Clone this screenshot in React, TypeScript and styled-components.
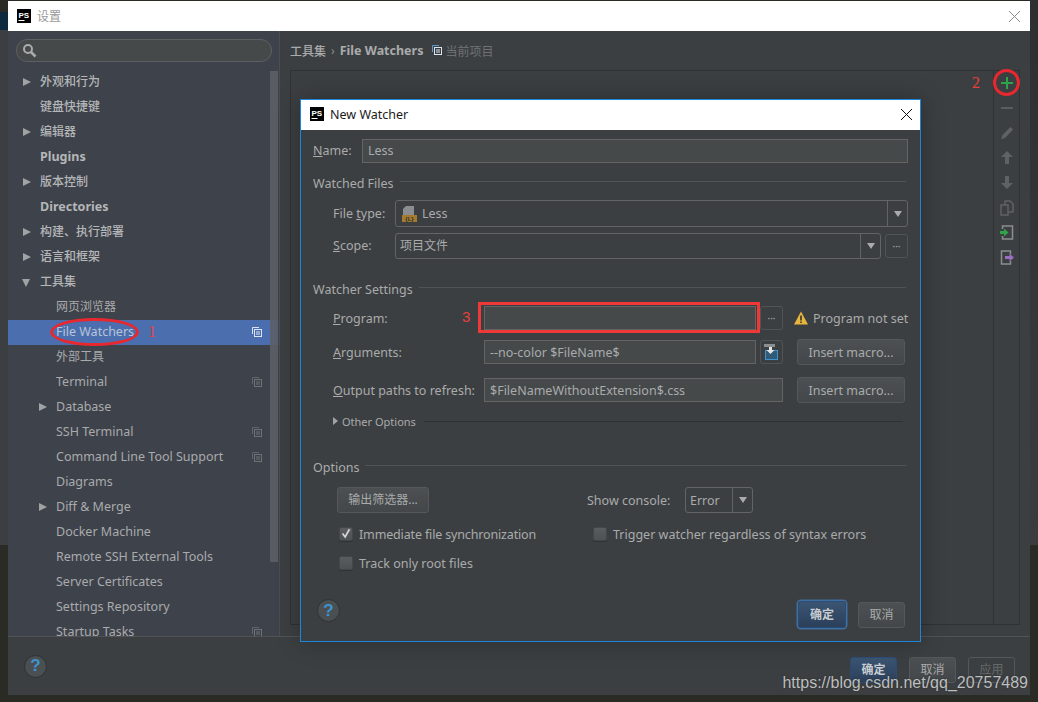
import React from "react";
import styled, { createGlobalStyle } from "styled-components";

const FONT = `"Noto Sans", "Noto Sans CJK SC", sans-serif`;

const isCjk = (s: string) => /[^\x00-\x7f]/.test(s);

const GlobalStyle = createGlobalStyle`
  html, body {
    margin: 0;
    padding: 0;
    background: #2b2b25;
  }
  * {
    box-sizing: border-box;
  }
`;

const Desktop = styled.div`
  position: relative;
  width: 1038px;
  height: 702px;
  overflow: hidden;
  padding: 1px 8px 7px;
  font-family: ${FONT};
  font-size: 12.5px;
  color: #a9abac;
  background:
    linear-gradient(#0d2a3f, #0d2a3f) 0 12px / 8px 18px no-repeat,
    linear-gradient(#3c3f41, #3c3f41) 0 30px / 8px 515px no-repeat,
    linear-gradient(#2e2f31, #3a3c3e) 1030px 0 / 8px 545px no-repeat,
    #2b2b25;
`;

const Window = styled.div`
  height: 100%;
  display: flex;
  flex-direction: column;
  background: #3c3f41;
`;

const TitleBar = styled.div`
  flex: none;
  height: 30px;
  background: #fff;
  display: flex;
  align-items: center;
  padding: 0 ${(p) => (p.$dialog ? "8px 2px 9px" : "10px 0 9px")};
  gap: 6px;
  font-size: ${(p) => (p.$dialog ? "12.5px" : "12px")};
  color: ${(p) => (p.$dialog ? "#1b1b1b" : "#999")};
`;

const TitleText = styled.span`
  flex: 1;
`;

const CloseBtn = styled.svg`
  width: 11px;
  height: 11px;
  stroke: ${(p) => p.color};
  stroke-width: 1;
  fill: none;
  display: block;
`;

const Main = styled.div`
  flex: 1;
  min-height: 0;
  display: flex;
`;

const Sidebar = styled.div`
  position: relative;
  width: 272px;
  flex: none;
  background: #3e424b;
  border-right: 1px solid #4c4f52;
  display: flex;
  flex-direction: column;
  overflow: hidden;
`;

const SearchBox = styled.div`
  flex: none;
  height: 23px;
  margin: 8px 7px 8px 8px;
  border: 1px solid #5d5f60;
  border-radius: 11px;
  background: #45494a;
  display: flex;
  align-items: center;
  padding-left: 5px;
`;

const Tree = styled.div`
  flex: 1;
  min-height: 0;
  overflow: hidden;
`;

const Row = styled.div`
  position: relative;
  height: 25px;
  display: flex;
  align-items: center;
  padding-left: ${(p) => (p.$child ? "48px" : "32px")};
  padding-right: 17px;
  background: ${(p) => (p.$selected ? "#4b6eaf" : "transparent")};
  color: ${(p) => (p.$selected ? "#b9c4d6" : p.$bold ? "#b4b6b7" : "#a9abac")};
  font-size: ${(p) => (p.$cjk ? "12px" : "12.5px")};
  font-weight: ${(p) => (!p.$bold ? 400 : p.$cjk ? 500 : 700)};
`;

const RowText = styled.span`
  flex: 1;
  white-space: nowrap;
  padding-bottom: 3px;
`;

const Arrow = styled.span`
  position: absolute;
  left: ${(p) => (p.$child ? "31px" : "15px")};
  top: 8px;
  width: 0;
  height: 0;
  border-style: solid;
  border-color: transparent;
  ${(p) =>
    p.$open
      ? `border-width: 8px 4px 0 4px; border-top-color: #a0a2a3; top: 9px; left: 14px;`
      : `border-width: 4px 0 4px 8px; border-left-color: #a0a2a3;`}
`;

const Scrollbar = styled.div`
  position: absolute;
  right: 0;
  top: 40px;
  width: 9px;
  height: 491px;
  background: #5c5f66;
  opacity: 0.9;
  border-right: 1px solid #3e424b;
`;

const Ellipse = styled.div`
  position: absolute;
  left: 42px;
  top: -2px;
  width: 89px;
  height: 28px;
  border: 3px solid #e8282e;
  border-radius: 50%;
`;

const RedNumber = styled.span`
  font-family: "Liberation Serif", serif;
  font-size: 16px;
  color: #e8403c;
  font-weight: 400;
`;

const OneMark = styled(RedNumber)`
  position: absolute;
  left: 140px;
  top: 3px;
`;

const Content = styled.div`
  flex: 1;
  display: flex;
  flex-direction: column;
  padding: 0 10px 11px 10px;
  min-width: 0;
`;

const Crumbs = styled.div`
  flex: none;
  height: 39px;
  display: flex;
  align-items: center;
  gap: 4px;
  font-weight: 700;
  color: #a9abac;
`;

const CrumbCjk = styled.span`
  font-size: 12px;
  font-weight: 500;
`;

const CrumbSep = styled.span`
  color: #8a8c8d;
  font-weight: 400;
  font-size: 12px;
  margin: 0 1px;
`;

const CrumbNote = styled.span`
  display: flex;
  align-items: center;
  gap: 3px;
  margin-left: 5px;
  font-weight: 400;
  font-size: 12px;
  color: #6f7274;
`;

const Panel = styled.div`
  flex: 1;
  border: 1px solid #2f3132;
  display: flex;
  justify-content: flex-end;
`;

const ToolStrip = styled.div`
  position: relative;
  width: 26px;
  border-left: 1px solid #2f3132;
  display: flex;
  flex-direction: column;
  align-items: center;
`;

const ToolSlot = styled.div`
  width: 100%;
  height: 25px;
  display: flex;
  align-items: center;
  justify-content: center;
  padding-bottom: 2px;
`;

const Circle = styled.div`
  position: absolute;
  left: -1px;
  top: -2px;
  width: 27px;
  height: 27px;
  border: 3px solid #e8282e;
  border-radius: 50%;
`;

const TwoMark = styled(RedNumber)`
  position: absolute;
  left: -22px;
  top: 3px;
`;

const Footer = styled.div`
  flex: none;
  height: 59px;
  border-top: 1px solid #515354;
  display: flex;
  align-items: center;
  padding: 0 15px 0 16px;
`;

const Spacer = styled.div`
  flex: 1;
`;

const Help = styled.div`
  width: 23px;
  height: 23px;
  flex: none;
  margin-bottom: ${(p) => p.$lift || 0}px;
  border-radius: 50%;
  border: 1px solid #2f3234;
  background: #4a4f52;
  color: #3f93cf;
  display: flex;
  align-items: center;
  justify-content: center;
  font-family: "Liberation Sans", sans-serif;
  font-weight: 700;
  font-size: 17px;
`;

const Actions = styled.div`
  display: flex;
  align-items: center;
  gap: 12px;
  margin-top: ${(p) => p.$mt || 0}px;
`;

const Btn = styled.div`
  width: ${(p) => p.$w || 47}px;
  height: ${(p) => p.$h || 26}px;
  flex: none;
  border-radius: 3px;
  padding-bottom: ${(p) => (p.$latin ? 0 : 2)}px;
  display: flex;
  align-items: center;
  justify-content: center;
  white-space: nowrap;
  font-size: ${(p) => (p.$latin ? "12.5px" : "12px")};
  border: 1px solid
    ${(p) => (p.$primary ? "#2a4d75" : p.$disabled ? "#555859" : "#54585a")};
  background: ${(p) =>
    p.$primary
      ? "linear-gradient(#3b5573, #2b3f5a)"
      : p.$disabled
        ? "transparent"
        : "linear-gradient(#4c5052, #434749)"};
  color: ${(p) =>
    p.$primary ? "#c8ccd0" : p.$disabled ? "#666a6c" : "#a9abac"};
  font-weight: ${(p) => (p.$primary ? 700 : 400)};
  box-shadow: ${(p) => (p.$focus ? "0 0 0 1.5px #3f6ea0" : "none")};
`;

const MacroBtn = styled(Btn)`
  margin-left: 14px;
`;

const Dialog = styled.div`
  position: absolute;
  left: 300px;
  top: 99px;
  width: 621px;
  height: 543px;
  border: 1px solid #1c86dc;
  background: #3c3f41;
  box-shadow: 0 0 22px rgba(0, 0, 0, 0.28);
  display: flex;
  flex-direction: column;
`;

const DialogBody = styled.div`
  flex: 1;
  display: flex;
  flex-direction: column;
  padding: 0 12px 11px;
`;

const FormRow = styled.div`
  position: relative;
  flex: none;
  display: flex;
  align-items: center;
  height: ${(p) => p.$h || 24}px;
  margin-top: ${(p) => p.$mt || 0}px;
  padding-left: ${(p) => p.$indent || 0}px;
`;

const Label = styled.label`
  flex: none;
  width: ${(p) => p.$w}px;
  margin-left: ${(p) => p.$ml || 0}px;
  padding-bottom: ${(p) => (p.$up ? 2 : 0)}px;
  white-space: nowrap;
`;

const Input = styled.div`
  flex: ${(p) => (p.$w ? "none" : "1")};
  width: ${(p) => (p.$w ? `${p.$w}px` : "auto")};
  height: 24px;
  border: 1px solid #646464;
  background: #45494a;
  padding: 0 5px ${(p) => (p.$up ? 2 : 0)}px;
  display: flex;
  align-items: center;
  white-space: nowrap;
`;

const RedBox = styled.div`
  position: relative;
  flex: none;
  &::after {
    content: "";
    position: absolute;
    inset: -4px -4px -3px -6px;
    border: 3px solid #ef3838;
  }
`;

const ThreeMark = styled(RedNumber)`
  position: absolute;
  left: 149px;
  top: 2px;
  font-family: "Liberation Sans", sans-serif;
  font-size: 15px;
`;

const Heading = styled.div`
  flex: none;
  height: 16px;
  margin-top: ${(p) => p.$mt}px;
  margin-right: 2px;
  display: flex;
  align-items: center;
  gap: 6px;
  white-space: nowrap;
  &::after {
    content: "";
    flex: 1;
    height: 1px;
    margin-top: -4px;
    background: #515354;
  }
`;

const OtherOptions = styled.div`
  flex: none;
  height: 16px;
  margin-top: 11px;
  margin-left: 20px;
  margin-right: 5px;
  display: flex;
  align-items: center;
  font-size: 11px;
  white-space: nowrap;
  &::before {
    content: "";
    width: 0;
    height: 0;
    margin-right: 4px;
    border-style: solid;
    border-color: transparent transparent transparent #a0a2a3;
    border-width: 4px 0 4px 5px;
  }
  &::after {
    content: "";
    flex: 1;
    height: 1px;
    margin-left: 8px;
    background: #2f3132;
  }
`;

const Combo = styled.div`
  flex: ${(p) => (p.$w ? "none" : "1")};
  width: ${(p) => (p.$w ? `${p.$w}px` : "auto")};
  height: 100%;
  border: 1px solid #646464;
  border-radius: 3px;
  display: flex;
  align-items: center;
  min-width: 0;
`;

const ComboValue = styled.div`
  flex: 1;
  display: flex;
  align-items: center;
  gap: 5px;
  padding-left: ${(p) => (p.$icon ? 6 : 4)}px;
  padding-bottom: ${(p) => (p.$cjk ? 2 : 0)}px;
  height: 100%;
  font-size: ${(p) => (p.$cjk ? "12px" : "12.5px")};
`;

const ComboArrow = styled.div`
  flex: none;
  width: 20px;
  height: 100%;
  border-left: 1px solid #646464;
  display: flex;
  align-items: center;
  justify-content: center;
  &::after {
    content: "";
    width: 0;
    height: 0;
    border-style: solid;
    border-color: #a9abac transparent transparent transparent;
    border-width: 6px 4px 0 4px;
  }
`;

const SmallBtn = styled.div`
  flex: none;
  width: 23px;
  height: 24px;
  margin-left: ${(p) => p.$ml || 4}px;
  border: 1px solid #515456;
  border-radius: 3px;
  display: flex;
  align-items: center;
  justify-content: center;
  color: #a9abac;
  font-size: 10px;
  line-height: 1;
`;

const Warn = styled.div`
  flex: none;
  display: flex;
  align-items: center;
  gap: 5px;
  margin-left: 11px;
  white-space: nowrap;
`;

const Check = styled.div`
  flex: none;
  width: 14px;
  height: 14px;
  margin: 0 6px 0 ${(p) => p.$ml || 0}px;
  border-radius: 2px;
  background: linear-gradient(#5a5d5f, #4e5153);
  border: 1px solid #43474a;
  box-shadow: 0 1px 0 #2f3234;
  display: flex;
  align-items: center;
  justify-content: center;
`;

const CheckText = styled.span`
  white-space: nowrap;
  flex: none;
  width: ${(p) => (p.$fixed ? `${p.$fixed}px` : "auto")};
  letter-spacing: ${(p) => (p.$tight ? "-0.15px" : "0")};
`;

const DialogFooter = styled.div`
  margin-top: auto;
  display: flex;
  align-items: center;
  padding: 0 3px 0 4px;
`;

const Watermark = styled.div`
  position: absolute;
  right: 10px;
  top: 673px;
  font-family: "Liberation Sans", sans-serif;
  font-size: 16px;
  line-height: 20px;
  color: #bcbebf;
  text-shadow: 0 0 2px #2b2b2b;
  white-space: nowrap;
`;

const PsLogoBox = styled.svg`
  width: 14px;
  height: 14px;
  flex: none;
  display: block;
`;

const CopyBox = styled.svg`
  width: 10px;
  height: 10px;
  flex: none;
  margin-bottom: 2px;
  fill: none;
`;

function PsLogo() {
  return (
    <PsLogoBox viewBox="0 0 14 14">
      <rect width="14" height="14" fill="#000" />
      <text x="1.5" y="8.5" fontFamily="Liberation Sans, sans-serif" fontWeight="700" fontSize="8" fill="#fff">
        PS
      </text>
      <rect x="1.5" y="11" width="6" height="1" fill="#fff" />
    </PsLogoBox>
  );
}

function CopyIcon({ active, tinted }: { active?: boolean; tinted?: boolean }) {
  const front = active || tinted ? "#dbe4f2" : "#6f7274";
  const back = active ? "#dbe4f2" : tinted ? "#5f9cc5" : "#62666a";
  return (
    <CopyBox viewBox="0 0 10 10" stroke={front}>
      <path d="M.5 7V.5H7" stroke={back} />
      <rect x="2.5" y="2.5" width="7" height="7" />
      <path d="M4 5h4M4 7h4" />
    </CopyBox>
  );
}

function SearchIcon() {
  return (
    <svg width="15" height="15" viewBox="0 0 15 15" fill="none" stroke="#a9abac" strokeWidth="2">
      <circle cx="6" cy="6" r="4" />
      <path d="M9 9l4.5 4.5" strokeWidth="2.5" />
    </svg>
  );
}

function ToolIcon({ kind }: { kind: string }) {
  if (kind === "plus") {
    return (
      <svg width="14" height="14" viewBox="0 0 14 14" stroke="#2da44a" strokeWidth="2">
        <path d="M7 1v12M1 7h12" />
      </svg>
    );
  }
  if (kind === "minus") {
    return (
      <svg width="14" height="14" viewBox="0 0 14 14" stroke="#5a5d5f" strokeWidth="2">
        <path d="M1 7h12" />
      </svg>
    );
  }
  if (kind === "edit") {
    return (
      <svg width="14" height="14" viewBox="0 0 14 14" fill="#5f6264">
        <path d="M10.500 1l2.500 2.500-7.500 8L1 13.500l1.500-4.500z" />
      </svg>
    );
  }
  if (kind === "up" || kind === "down") {
    return (
      <svg width="12" height="13" viewBox="0 0 12 13" fill="#5f6264">
        <path d={kind === "up" ? "M6 0l6 6H8v7H4V6H0z" : "M6 13L0 7h4V0h4v7h4z"} />
      </svg>
    );
  }
  if (kind === "copy") {
    return (
      <svg width="14" height="16" viewBox="0 0 14 16" fill="none" stroke="#5f6264" strokeWidth="1.500">
        <path d="M1 5h7v10H1z" />
        <path d="M5 5V1h5l3 3v8H8" />
      </svg>
    );
  }
  const accent = kind === "import" ? "#2da44a" : "#9a6fbf";
  return (
    <svg width="14" height="15" viewBox="0 0 14 15" fill="none">
      <path d={kind === "import" ? "M2.500 4V1h10v13h-10v-3" : "M10.500 4V1h-9v13h9v-3"} stroke="#8b8e90" strokeWidth="1.500" />
      <path d={kind === "import" ? "M0 6h4V3.500L8.500 7.500 4 11.500V9H0z" : "M5 6h4.500V3.500L14 7.500l-4.500 4V9H5z"} fill={accent} />
    </svg>
  );
}

function LessIcon() {
  return (
    <svg width="15" height="16" viewBox="0 0 15 16">
      <path d="M4 0h8v9H1V3z" fill="#8b8e90" />
      <rect y="9" width="15" height="7" fill="#a37a2e" />
      <text x="7.5" y="15" textAnchor="middle" fontFamily="Liberation Sans, sans-serif" fontWeight="700" fontSize="6" fill="#2f3132">
        {"{L}"}
      </text>
    </svg>
  );
}

function WarnIcon() {
  return (
    <svg width="14" height="14" viewBox="0 0 14 14">
      <path d="M7 .5L14 13.500H0z" fill="#e8b63f" />
      <path d="M6.200 4.500h1.600v5H6.200zM6.200 10.500h1.600v1.600H6.200z" fill="#33312b" />
    </svg>
  );
}

function InsertIcon() {
  return (
    <svg width="15" height="16" viewBox="0 0 15 16" fill="none">
      <rect x="1.500" y="6.500" width="12" height="9" stroke="#3f93cf" fill="#2f5a78" />
      <rect x="0" y="0" width="11" height="3" fill="#8b8e90" />
      <path d="M5 3h3v3h2.500L6.500 10 2.500 6H5z" fill="#e6e6e6" />
    </svg>
  );
}

type Item = {
  text: string;
  child?: boolean;
  bold?: boolean;
  arrow?: boolean;
  open?: boolean;
  copy?: boolean;
  selected?: boolean;
};

const items: Item[] = [
  { text: "外观和行为", bold: true, arrow: true },
  { text: "键盘快捷键", bold: true },
  { text: "编辑器", bold: true, arrow: true },
  { text: "Plugins", bold: true },
  { text: "版本控制", bold: true, arrow: true },
  { text: "Directories", bold: true },
  { text: "构建、执行部署", bold: true, arrow: true },
  { text: "语言和框架", bold: true, arrow: true },
  { text: "工具集", bold: true, arrow: true, open: true },
  { text: "网页浏览器", child: true },
  { text: "File Watchers", child: true, copy: true, selected: true },
  { text: "外部工具", child: true },
  { text: "Terminal", child: true, copy: true },
  { text: "Database", child: true, arrow: true },
  { text: "SSH Terminal", child: true, copy: true },
  { text: "Command Line Tool Support", child: true, copy: true },
  { text: "Diagrams", child: true },
  { text: "Diff & Merge", child: true, arrow: true },
  { text: "Docker Machine", child: true },
  { text: "Remote SSH External Tools", child: true },
  { text: "Server Certificates", child: true },
  { text: "Settings Repository", child: true },
  { text: "Startup Tasks", child: true, copy: true },
];

const tools = ["plus", "minus", "edit", "up", "down", "copy", "import", "export"];

export default function App() {
  return (
    <Desktop>
      <GlobalStyle />
      <Window>
        <TitleBar>
          <PsLogo />
          <TitleText>设置</TitleText>
          <CloseBtn viewBox="0 0 11 11" color="#8a8a8a">
            <path d="M0 0l11 11M11 0L0 11" />
          </CloseBtn>
        </TitleBar>
        <Main>
          <Sidebar>
            <SearchBox>
              <SearchIcon />
            </SearchBox>
            <Tree>
              {items.map((item) => (
                <Row
                  key={item.text}
                  $child={item.child}
                  $bold={item.bold}
                  $cjk={isCjk(item.text)}
                  $selected={item.selected}
                >
                  {item.arrow && <Arrow $child={item.child} $open={item.open} />}
                  {item.selected && <Ellipse />}
                  {item.selected && <OneMark>1</OneMark>}
                  <RowText>{item.text}</RowText>
                  {item.copy && <CopyIcon active={item.selected} />}
                </Row>
              ))}
            </Tree>
            <Scrollbar />
          </Sidebar>
          <Content>
            <Crumbs>
              <CrumbCjk>工具集</CrumbCjk>
              <CrumbSep>›</CrumbSep>
              <span>File Watchers</span>
              <CrumbNote>
                <CopyIcon tinted />
                当前项目
              </CrumbNote>
            </Crumbs>
            <Panel>
              <ToolStrip>
                <Circle />
                <TwoMark>2</TwoMark>
                {tools.map((t) => (
                  <ToolSlot key={t}>
                    <ToolIcon kind={t} />
                  </ToolSlot>
                ))}
              </ToolStrip>
            </Panel>
          </Content>
        </Main>
        <Footer>
          <Help>?</Help>
          <Spacer />
          <Actions $mt={8}>
            <Btn $primary>确定</Btn>
            <Btn>取消</Btn>
            <Btn $disabled>应用</Btn>
          </Actions>
        </Footer>
      </Window>

      <Dialog>
        <TitleBar $dialog>
          <PsLogo />
          <TitleText>New Watcher</TitleText>
          <CloseBtn viewBox="0 0 11 11" color="#111">
            <path d="M0 0l11 11M11 0L0 11" />
          </CloseBtn>
        </TitleBar>
        <DialogBody>
          <FormRow $mt={9}>
            <Label $w={49} $up>
              <u>N</u>ame:
            </Label>
            <Input $up>Less</Input>
          </FormRow>

          <Heading $mt={12}>Watched Files</Heading>
          <FormRow $mt={9} $h={27} $indent={20}>
            <Label $w={62}>
              File <u>t</u>ype:
            </Label>
            <Combo>
              <ComboValue $icon>
                <LessIcon />
                Less
              </ComboValue>
              <ComboArrow />
            </Combo>
          </FormRow>
          <FormRow $mt={6} $h={26} $indent={20}>
            <Label $w={62} $up>
              <u>S</u>cope:
            </Label>
            <Combo>
              <ComboValue $cjk>项目文件</ComboValue>
              <ComboArrow />
            </Combo>
            <SmallBtn>···</SmallBtn>
          </FormRow>

          <Heading $mt={22}>Watcher Settings</Heading>
          <FormRow $mt={9} $indent={20}>
            <Label $w={151}>
              <u>P</u>rogram:
            </Label>
            <ThreeMark>3</ThreeMark>
            <RedBox>
              <Input $w={272} />
            </RedBox>
            <SmallBtn>···</SmallBtn>
            <Warn>
              <WarnIcon />
              <span>Program not set</span>
            </Warn>
          </FormRow>
          <FormRow $mt={10} $indent={20}>
            <Label $w={151}>
              <u>A</u>rguments:
            </Label>
            <Input $w={272}>--no-color $FileName$</Input>
            <SmallBtn>
              <InsertIcon />
            </SmallBtn>
            <MacroBtn $w={108} $latin>
              Insert macro...
            </MacroBtn>
          </FormRow>
          <FormRow $mt={14} $indent={20}>
            <Label $w={151}>
              <u>O</u>utput paths to refresh:
            </Label>
            <Input $w={299}>$FileNameWithoutExtension$.css</Input>
            <MacroBtn $w={108} $latin>
              Insert macro...
            </MacroBtn>
          </FormRow>
          <OtherOptions>Other Options</OtherOptions>

          <Heading $mt={30}>Options</Heading>
          <FormRow $mt={12} $h={26} $indent={24}>
            <Btn $w={92}>输出筛选器...</Btn>
            <Label $w={98} $ml={158}>
              Show console:
            </Label>
            <Combo $w={68}>
              <ComboValue>Error</ComboValue>
              <ComboArrow />
            </Combo>
          </FormRow>
          <FormRow $mt={12} $h={18} $indent={24}>
            <Check $ml={2}>
              <svg width="14" height="14" viewBox="0 0 14 14" fill="none" stroke="#d5d6d7" strokeWidth="2">
                <path d="M3 6.500L6 10.500L11 1.500" />
              </svg>
            </Check>
            <CheckText $fixed={234} $tight>
              Immediate file synchronization
            </CheckText>
            <Check />
            <CheckText>Trigger watcher regardless of syntax errors</CheckText>
          </FormRow>
          <FormRow $mt={11} $h={18} $indent={24}>
            <Check $ml={2} />
            <CheckText>Track only root files</CheckText>
          </FormRow>

          <DialogFooter>
            <Help $lift={8}>?</Help>
            <Spacer />
            <Actions>
              <Btn $primary $focus $w={48} $h={27}>
                确定
              </Btn>
              <Btn>取消</Btn>
            </Actions>
          </DialogFooter>
        </DialogBody>
      </Dialog>

      <Watermark>https://blog.csdn.net/qq_20757489</Watermark>
    </Desktop>
  );
}
